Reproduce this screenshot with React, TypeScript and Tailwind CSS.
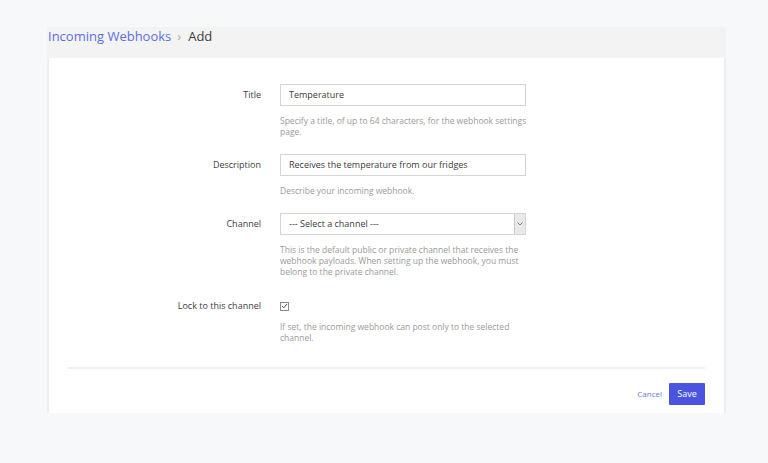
import React from 'react';

const font = { fontFamily: '"Open Sans", "Noto Sans", sans-serif' };

function Row({ label, children, help, className = '', helpClass = 'mt-[9px]' }: { label: string; children: React.ReactNode; help: React.ReactNode; className?: string; helpClass?: string }) {
    return (
        <div className={`flex ${className}`}>
            <div className="w-[212px] shrink-0 text-right text-[9px] leading-[22px] text-[#3d3c40]">{label}</div>
            <div className="ml-[19px] w-[246px]">
                {children}
                <p className={`w-[252px] text-[8.5px] leading-[11px] text-[#9a9a9a] ${helpClass}`}>{help}</p>
            </div>
        </div>
    );
}

export default function App() {
    return (
        <div className="min-h-[463px] bg-[#f7f8fa] pt-[27px]" style={font}>
            <div className="ml-[47px] w-[679px]">
                {/* --- Breadcrumb --- */}
                <div className="flex h-[31px] items-start bg-[#f3f3f3] pl-[1px] pt-[0px] text-[13px] leading-[18px]">
                    <span className="text-[#5f6ee0]">Incoming Webhooks</span>
                    <span className="ml-[6px] mr-[7px] text-[13px] text-[#aaaaaa]">›</span>
                    <span className="text-[#3d3c40]">Add</span>
                </div>

                {/* --- Form panel --- */}
                <div className="h-[355px] border-x-2 border-[#eeeeee] bg-white pt-[26px]">
                    <Row label="Title" help="Specify a title, of up to 64 characters, for the webhook settings page.">
                        <div className="flex h-[22px] items-center border border-[#d4d4d4] pl-[8px] text-[9px] text-[#3d3c40]">Temperature</div>
                    </Row>

                    <Row className="mt-[17px]" label="Description" help="Describe your incoming webhook.">
                        <div className="flex h-[22px] items-center border border-[#d4d4d4] pl-[8px] text-[9px] text-[#3d3c40]">Receives the temperature from our fridges</div>
                    </Row>

                    <Row
                        className="mt-[17px]"
                        label="Channel"
                        help="This is the default public or private channel that receives the webhook payloads. When setting up the webhook, you must belong to the private channel."
                    >
                        <div className="flex h-[22px] items-center border border-[#d4d4d4] text-[9px] text-[#3d3c40]">
                            <span className="flex-1 pl-[8px]">--- Select a channel ---</span>
                            <div className="flex h-full w-[11px] items-center justify-center border-l border-[#c8c8c8] bg-[#e9e9e9]">
                                <svg width="6" height="4" viewBox="0 0 6 4" fill="none" stroke="#777" strokeWidth="1">
                                    <path d="M0.5 0.5 L3 3 L5.5 0.5" />
                                </svg>
                            </div>
                        </div>
                    </Row>

                    <Row
                        className="mt-[18px]"
                        label="Lock to this channel"
                        helpClass="mt-[4px]"
                        help="If set, the incoming webhook can post only to the selected channel."
                    >
                        <div className="flex h-[22px] items-center">
                            <div className="flex h-[9px] w-[9px] items-center justify-center border border-[#8a8a8a] bg-white">
                                <svg width="7" height="6" viewBox="0 0 7 6" fill="none" stroke="#555" strokeWidth="1">
                                    <path d="M1 3 L2.8 4.8 L6 1" />
                                </svg>
                            </div>
                        </div>
                    </Row>

                    <div className="mx-[19px] mt-[24px] h-[2px] bg-[#efefef]" />

                    <div className="mr-[19px] mt-[14px] flex items-center justify-end gap-[7px]">
                        <span className="text-[8px] text-[#6b7bd3]">Cancel</span>
                        <button className="h-[22px] w-[36px] rounded-[1px] bg-[#4a54de] text-[9px] text-white">Save</button>
                    </div>
                </div>
            </div>
        </div>
    );
}
